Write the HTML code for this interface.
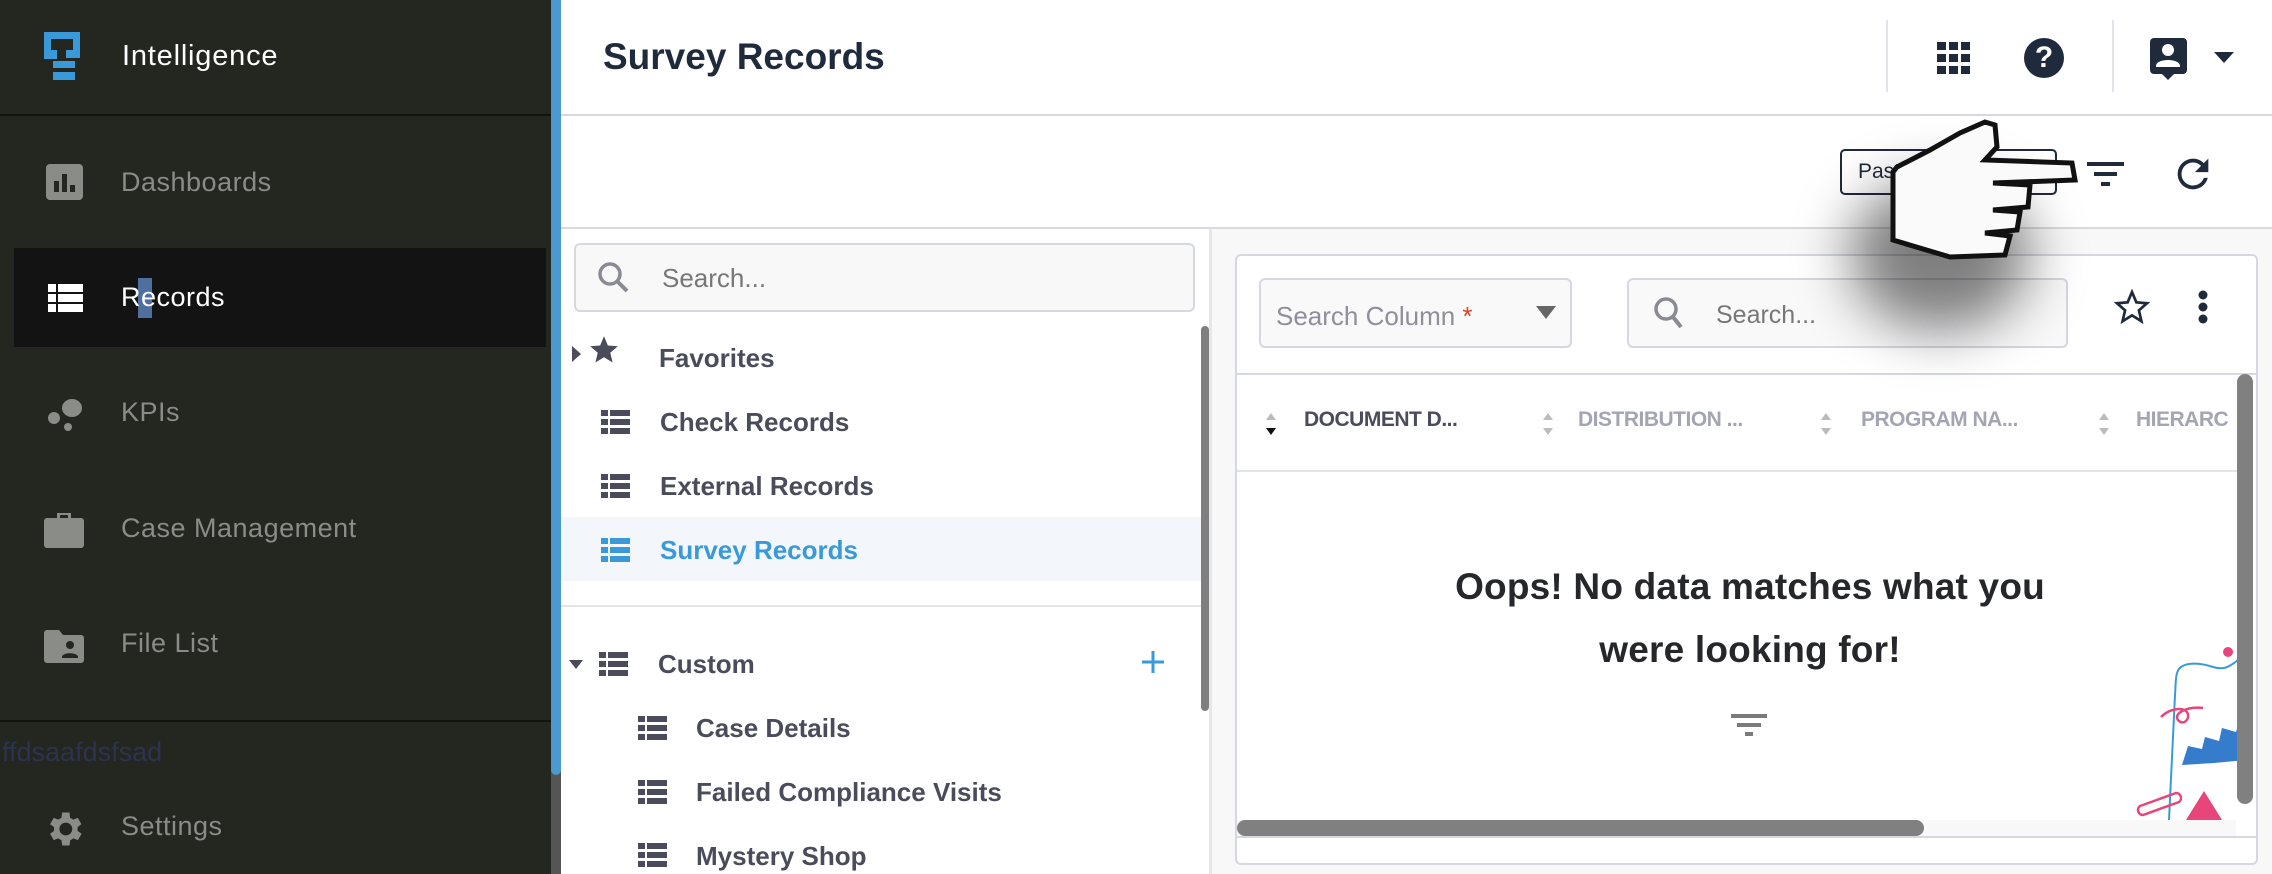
<!DOCTYPE html>
<html><head><meta charset="utf-8"><style>
*{margin:0;padding:0;box-sizing:border-box}
body{width:2272px;height:874px;overflow:hidden;position:relative;font-family:"Liberation Sans",sans-serif;background:#fff}
.a{position:absolute}
.side{left:0;top:0;width:552px;height:874px;background:#23271f}
.sitem{position:absolute;left:121px;font-size:27px;color:#8a8c88;letter-spacing:0.5px}
.li{position:absolute;font-size:26px;color:#4a4c5c;font-weight:bold}
.hd{position:absolute;top:408px;font-size:21px;font-weight:bold;color:#a3a5b3;letter-spacing:-0.5px}
</style></head><body>
<!-- sidebar -->
<div class="a side"></div>
<div class="a" style="left:0;top:114px;width:552px;height:2px;background:#121410"></div>
<svg class="a" style="left:44px;top:32px" width="37" height="49" viewBox="0 0 37 49"><path d="M0 0H36V26H22V18H29V7H7V18H13V27H0Z" fill="#3a9ad9"/><rect x="9" y="29" width="22" height="7" fill="#3a9ad9"/><rect x="9" y="40" width="22" height="8" fill="#3a9ad9"/></svg>
<div class="a" style="left:122px;top:40px;font-size:29px;color:#fff;letter-spacing:0.8px">Intelligence</div>
<svg class="a" style="left:46px;top:164px" width="37" height="36"><rect width="37" height="36" rx="4" fill="#8a8c88"/><rect x="8" y="17" width="5" height="11" fill="#23271f"/><rect x="16" y="10" width="5" height="18" fill="#23271f"/><rect x="24" y="21" width="5" height="7" fill="#23271f"/></svg>
<div class="sitem" style="top:167px">Dashboards</div>
<div class="a" style="left:14px;top:248px;width:532px;height:99px;background:#131313"></div>
<svg class="a" style="left:48px;top:284px" width="35" height="28" fill="#fff"><rect width="8" height="8"/><rect x="10" width="25" height="8"/><rect y="10" width="8" height="8"/><rect x="10" y="10" width="25" height="8"/><rect y="20" width="8" height="8"/><rect x="10" y="20" width="25" height="8"/></svg>
<div class="a" style="left:138px;top:278px;width:14px;height:40px;background:#4f6f9f"></div>
<div class="sitem" style="top:282px;color:#fff">Records</div>
<svg class="a" style="left:48px;top:398px" width="34" height="33" fill="#8a8c88"><circle cx="6" cy="20" r="6"/><ellipse cx="24" cy="10" rx="10" ry="9"/><circle cx="20" cy="29" r="4"/></svg>
<div class="sitem" style="top:397px">KPIs</div>
<svg class="a" style="left:44px;top:510px" width="40" height="38" fill="#8a8c88"><path d="M13 8V3h14v5h-3V5h-8v3z"/><rect y="8" width="40" height="30" rx="3"/></svg>
<div class="sitem" style="top:513px">Case Management</div>
<svg class="a" style="left:44px;top:630px" width="40" height="33"><path d="M0 3a3 3 0 0 1 3-3h12l4 5h18a3 3 0 0 1 3 3v22a3 3 0 0 1-3 3H3a3 3 0 0 1-3-3z" fill="#8a8c88"/><circle cx="26" cy="15" r="4" fill="#23271f"/><path d="M18 27c0-5 16-5 16 0v1H18z" fill="#23271f"/></svg>
<div class="sitem" style="top:628px">File List</div>
<div class="a" style="left:0;top:720px;width:552px;height:2px;background:#121410"></div>
<div class="a" style="left:2px;top:737px;font-size:27px;color:#2b3350">ffdsaafdsfsad</div>
<svg class="a" style="left:42px;top:807px" width="44" height="44" viewBox="0 0 24 24" fill="#8a8c88"><path d="M19.4 13a7.5 7.5 0 0 0 0-2l2.1-1.6-2-3.5-2.5 1a7 7 0 0 0-1.7-1L15 3h-4l-.4 2.9a7 7 0 0 0-1.7 1l-2.5-1-2 3.5L6.6 11a7.5 7.5 0 0 0 0 2l-2.2 1.6 2 3.5 2.5-1a7 7 0 0 0 1.7 1L11 21h4l.4-2.9a7 7 0 0 0 1.7-1l2.5 1 2-3.5zM13 15.5a3.5 3.5 0 1 1 0-7 3.5 3.5 0 0 1 0 7z"/></svg>
<div class="sitem" style="top:811px">Settings</div>
<div class="a" style="left:551px;top:0;width:10px;height:874px;background:#555"></div>
<div class="a" style="left:551px;top:0;width:10px;height:775px;background:#4a9ad0;border-radius:0 0 5px 5px"></div>

<!-- header -->
<div class="a" style="left:561px;top:114px;width:1711px;height:2px;background:#d5d8e0"></div>
<div class="a" style="left:603px;top:36px;font-size:37px;font-weight:bold;color:#1f2a3c">Survey Records</div>
<div class="a" style="left:1886px;top:20px;width:2px;height:72px;background:#e2e3e8"></div>
<div class="a" style="left:2112px;top:20px;width:2px;height:72px;background:#e2e3e8"></div>
<svg class="a" style="left:1937px;top:42px" width="33" height="32" fill="#1f2a3c"><rect width="9" height="8"/><rect x="12" width="9" height="8"/><rect x="24" width="9" height="8"/><rect y="12" width="9" height="8"/><rect x="12" y="12" width="9" height="8"/><rect x="24" y="12" width="9" height="8"/><rect y="24" width="9" height="8"/><rect x="12" y="24" width="9" height="8"/><rect x="24" y="24" width="9" height="8"/></svg>
<div class="a" style="left:2024px;top:38px;width:40px;height:40px;border-radius:50%;background:#1f2a3c;color:#fff;font-weight:bold;font-size:30px;text-align:center;line-height:40px">?</div>
<svg class="a" style="left:2150px;top:38px" width="37" height="42"><path d="M4 0h29a4 4 0 0 1 4 4v28a4 4 0 0 1-4 4H24l-6 6-6-6H4a4 4 0 0 1-4-4V4a4 4 0 0 1 4-4z" fill="#1f2a3c"/><circle cx="18" cy="12" r="6" fill="#fff"/><path d="M6 28c0-8 24-8 24 0v1H6z" fill="#fff"/></svg>
<svg class="a" style="left:2214px;top:52px" width="20" height="11"><path d="M0 0h20L10 11z" fill="#1f2a3c"/></svg>

<!-- toolbar -->
<div class="a" style="left:1840px;top:149px;width:217px;height:46px;border:2px solid #1f2a3c;border-radius:5px;font-size:21px;color:#1f2a3c;padding:9px 16px">Past 30 Days</div>
<svg class="a" style="left:2087px;top:162px" width="37" height="24" fill="#1f2a3c"><rect width="37" height="4"/><rect x="7" y="10" width="23" height="4"/><rect x="14" y="20" width="9" height="4"/></svg>
<svg class="a" style="left:2170px;top:151px" width="46" height="46" viewBox="0 0 24 24" fill="#1f2a3c"><path d="M17.65 6.35A7.96 7.96 0 0 0 12 4a8 8 0 1 0 7.73 10h-2.08A6 6 0 1 1 12 6c1.66 0 3.14.69 4.22 1.78L13 11h7V4z"/></svg>
<div class="a" style="left:561px;top:227px;width:1711px;height:2px;background:#d9dadd"></div>

<!-- left panel -->
<div class="a" style="left:561px;top:229px;width:650px;height:645px;background:#fff"></div>
<div class="a" style="left:1209px;top:229px;width:3px;height:645px;background:#e6e7ea"></div>
<div class="a" style="left:574px;top:243px;width:621px;height:69px;border:2px solid #d5d8e0;border-radius:6px;background:#f8f8f8"></div>
<svg class="a" style="left:598px;top:262px" width="32" height="32"><circle cx="12" cy="12" r="10" stroke="#8a8a94" stroke-width="3.5" fill="none"/><path d="M19 19l10 10" stroke="#8a8a94" stroke-width="4"/></svg>
<div class="a" style="left:662px;top:263px;font-size:26px;color:#777">Search...</div>
<div class="a" style="left:1201px;top:326px;width:8px;height:385px;border-radius:4px;background:#7f7f7f"></div>
<svg class="a" style="left:572px;top:346px" width="9" height="16"><path d="M0 0l9 8-9 8z" fill="#4a4c5c"/></svg>
<svg class="a" style="left:589px;top:335px" width="30" height="30" viewBox="0 0 24 24"><path d="M12 1l3.1 7.4 8 .6-6.1 5.2 1.9 7.8L12 17.8 5.1 22l1.9-7.8L.9 9l8-.6z" fill="#4a4c5c"/></svg>
<div class="li" style="left:659px;top:343px">Favorites</div>
<div class="a" style="left:561px;top:517px;width:640px;height:64px;background:#f3f7fb"></div>
<div class="a" style="left:561px;top:605px;width:640px;height:2px;background:#e3e4e7"></div>
<div class="li" style="left:660px;top:407px">Check Records</div>
<div class="li" style="left:660px;top:471px">External Records</div>
<div class="li" style="left:660px;top:535px;color:#3a9ad9">Survey Records</div>
<svg class="a" style="left:569px;top:660px" width="14" height="9"><path d="M0 0h14L7 9z" fill="#4a4c5c"/></svg>
<div class="li" style="left:658px;top:649px">Custom</div>
<svg class="a" style="left:1142px;top:651px" width="22" height="22" fill="#3a9ad9"><rect x="9.5" width="3" height="22"/><rect y="9.5" width="22" height="3"/></svg>
<div class="li" style="left:696px;top:713px">Case Details</div>
<div class="li" style="left:696px;top:777px">Failed Compliance Visits</div>
<div class="li" style="left:696px;top:841px">Mystery Shop</div>
<svg width="0" height="0" style="position:absolute"><defs><g id="L"><rect width="7" height="6"/><rect x="9" width="20" height="6"/><rect y="9" width="7" height="6"/><rect x="9" y="9" width="20" height="6"/><rect y="18" width="7" height="6"/><rect x="9" y="18" width="20" height="6"/></g></defs></svg>
<svg class="a" style="left:601px;top:410px" width="29" height="24" fill="#4a4c5c"><use href="#L"/></svg>
<svg class="a" style="left:601px;top:474px" width="29" height="24" fill="#4a4c5c"><use href="#L"/></svg>
<svg class="a" style="left:601px;top:538px" width="29" height="24" fill="#3a9ad9"><use href="#L"/></svg>
<svg class="a" style="left:599px;top:652px" width="29" height="24" fill="#4a4c5c"><use href="#L"/></svg>
<svg class="a" style="left:638px;top:716px" width="29" height="24" fill="#4a4c5c"><use href="#L"/></svg>
<svg class="a" style="left:638px;top:780px" width="29" height="24" fill="#4a4c5c"><use href="#L"/></svg>
<svg class="a" style="left:638px;top:843px" width="29" height="24" fill="#4a4c5c"><use href="#L"/></svg>

<!-- right panel -->
<div class="a" style="left:1212px;top:229px;width:1060px;height:645px;background:#f8f8f8"></div>
<div class="a" style="left:1235px;top:254px;width:1023px;height:611px;background:#fff;border:2px solid #d5d8e0;border-radius:6px;overflow:hidden"></div>
<div class="a" style="left:1259px;top:278px;width:313px;height:70px;border:2px solid #d5d8e0;border-radius:6px;background:#f9f9fa"></div>
<div class="a" style="left:1276px;top:301px;font-size:26px;color:#8e8e9c">Search Column <span style="color:#e04020">*</span></div>
<svg class="a" style="left:1536px;top:306px" width="20" height="13"><path d="M0 0h20L10 13z" fill="#666"/></svg>
<div class="a" style="left:1627px;top:278px;width:441px;height:70px;border:2px solid #d5d8e0;border-radius:6px;background:#f9f9fa"></div>
<svg class="a" style="left:1653px;top:296px" width="34" height="36"><circle cx="13" cy="13" r="10" stroke="#8a8a94" stroke-width="3.5" fill="none"/><path d="M20 21l8 10" stroke="#8a8a94" stroke-width="4"/></svg>
<div class="a" style="left:1716px;top:301px;font-size:25px;color:#777">Search...</div>
<svg class="a" style="left:2113px;top:289px" width="38" height="36" viewBox="0 0 24 24"><path d="M12 2l2.9 6.9 7.1.6-5.4 4.7 1.7 7.3L12 17.6l-6.3 3.9 1.7-7.3L2 9.5l7.1-.6z" fill="none" stroke="#1f2a3c" stroke-width="1.8"/></svg>
<svg class="a" style="left:2198px;top:290px" width="10" height="34" fill="#1f2a3c"><circle cx="5" cy="5" r="4.5"/><circle cx="5" cy="17" r="4.5"/><circle cx="5" cy="29" r="4.5"/></svg>
<div class="a" style="left:1237px;top:373px;width:1019px;height:2px;background:#d5d8e0"></div>
<div class="a" style="left:1237px;top:470px;width:1000px;height:2px;background:#e3e4e7"></div>
<svg class="a" style="left:1264px;top:412px" width="14" height="24"><path d="M2 8l5-7 5 7z" fill="#bbb"/><path d="M2 16h10l-5 7z" fill="#111"/></svg>
<div class="hd" style="left:1304px;color:#4a4c5c">DOCUMENT D...</div>
<svg class="a" style="left:1541px;top:412px" width="14" height="24"><path d="M2 8l5-7 5 7z" fill="#bbb"/><path d="M2 16h10l-5 7z" fill="#bbb"/></svg>
<div class="hd" style="left:1578px">DISTRIBUTION ...</div>
<svg class="a" style="left:1819px;top:412px" width="14" height="24"><path d="M2 8l5-7 5 7z" fill="#bbb"/><path d="M2 16h10l-5 7z" fill="#bbb"/></svg>
<div class="hd" style="left:1861px">PROGRAM NA...</div>
<svg class="a" style="left:2097px;top:412px" width="14" height="24"><path d="M2 8l5-7 5 7z" fill="#bbb"/><path d="M2 16h10l-5 7z" fill="#bbb"/></svg>
<div class="hd" style="left:2136px">HIERARC</div>
<div class="a" style="left:1250px;top:555px;width:1000px;text-align:center;font-size:37px;font-weight:bold;color:#26272b;line-height:63px;letter-spacing:0.2px">Oops! No data matches what you<br>were looking for!</div>
<svg class="a" style="left:1731px;top:714px" width="36" height="22" fill="#7a7a7a"><rect width="36" height="4"/><rect x="6" y="9" width="24" height="4"/><rect x="14" y="18" width="8" height="4"/></svg>
<svg class="a" style="left:2130px;top:640px" width="108" height="180">
<circle cx="98" cy="12" r="5" fill="#e8457a"/>
<path d="M108 20c-10 8-15 10-25 7-12-4-25-5-32 0-6 4-5 15-6 28L39 180" stroke="#3a9ad9" stroke-width="2" fill="none"/>
<path d="M31 77c8-8 20-10 25-6 6 6-2 16-8 9-5-7 10-14 25-12" stroke="#e8457a" stroke-width="2.5" fill="none"/>
<path d="M52 125l6-19 14 3 3-12 14 4 3-13 14 4 4-14 6 2v40l-32 3z" fill="#357dcc"/>
<path d="M10 166l36-13a5 5 0 0 1 3 9l-36 13a5 5 0 0 1-3-9z" fill="none" stroke="#e8457a" stroke-width="2.5"/>
<path d="M74 151l-18 29h36z" fill="#e8457a"/>
</svg>
<div class="a" style="left:2237px;top:374px;width:16px;height:430px;border-radius:8px;background:#808080"></div>
<div class="a" style="left:1237px;top:820px;width:999px;height:17px;background:#f8f8f8"></div>
<div class="a" style="left:1237px;top:820px;width:687px;height:16px;border-radius:8px;background:#808080"></div>
<div class="a" style="left:1237px;top:836px;width:1019px;height:2px;background:#d5d8e0"></div>

<!-- hand cursor -->
<div class="a" style="left:1850px;top:180px;width:180px;height:150px;border-radius:50%;background:rgba(0,0,0,.5);filter:blur(28px)"></div>
<svg class="a" style="left:0;top:0" width="2272" height="874"><polygon points="1897,167 1930,150 1960,133 1985,122 1995,125 1997,147 1985,160 2072,163 2075,180 1993,183 2030,185 2028,207 1993,210 2020,212 2017,230 1985,233 2010,236 2005,255 1950,257 1893,240 1893,172" fill="#fafafa" stroke="#111" stroke-width="5" stroke-linejoin="miter"/></svg>
</body></html>
